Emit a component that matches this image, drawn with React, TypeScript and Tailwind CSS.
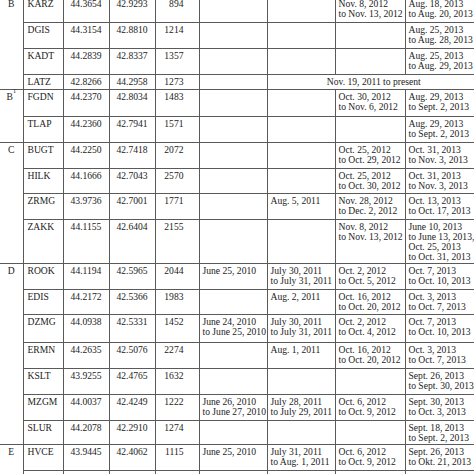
import React from 'react';

type Row = {
  group?: React.ReactNode;
  span?: number;
  station: string;
  lat: string;
  lon: string;
  elev: string;
  h: string;
  c1?: string[];
  c2?: string[];
  c3?: string[];
  c4?: string[];
  wide?: string;
};

const rows: Row[] = [
  { group: 'B', span: 4, station: 'KARZ', lat: '44.3654', lon: '42.9293', elev: '894', h: 'h-[26px]', c3: ['Nov. 8, 2012', 'to Nov. 13, 2012'], c4: ['Aug. 18, 2013', 'to Aug. 20, 2013'] },
  { station: 'DGIS', lat: '44.3154', lon: '42.8810', elev: '1214', h: 'h-[26px]', c4: ['Aug. 25, 2013', 'to Aug. 28, 2013'] },
  { station: 'KADT', lat: '44.2839', lon: '42.8337', elev: '1357', h: 'h-[26px]', c4: ['Aug. 25, 2013', 'to Aug. 29, 2013'] },
  { station: 'LATZ', lat: '42.8266', lon: '44.2958', elev: '1273', h: 'h-[15px]', wide: 'Nov. 19, 2011 to present' },
  { group: <>B<sup className="text-[6px] align-[4px]">1</sup></>, span: 2, station: 'FGDN', lat: '44.2370', lon: '42.8034', elev: '1483', h: 'h-[27px]', c3: ['Oct. 30, 2012', 'to Nov. 6, 2012'], c4: ['Aug. 29, 2013', 'to Sept. 2, 2013'] },
  { station: 'TLAP', lat: '44.2360', lon: '42.7941', elev: '1571', h: 'h-[26px]', c4: ['Aug. 29, 2013', 'to Sept. 2, 2013'] },
  { group: 'C', span: 4, station: 'BUGT', lat: '44.2250', lon: '42.7418', elev: '2072', h: 'h-[26px]', c3: ['Oct. 25, 2012', 'to Oct. 29, 2012'], c4: ['Oct. 31, 2013', 'to Nov. 3, 2013'] },
  { station: 'HILK', lat: '44.1666', lon: '42.7043', elev: '2570', h: 'h-[25px]', c3: ['Oct. 25, 2012', 'to Oct. 30, 2012'], c4: ['Oct. 31, 2013', 'to Nov. 3, 2013'] },
  { station: 'ZRMG', lat: '43.9736', lon: '42.7001', elev: '1771', h: 'h-[26px]', c2: ['Aug. 5, 2011'], c3: ['Nov. 28, 2012', 'to Dec. 2, 2012'], c4: ['Oct. 13, 2013', 'to Oct. 17, 2013'] },
  { station: 'ZAKK', lat: '44.1155', lon: '42.6404', elev: '2155', h: 'h-[44px]', c3: ['Nov. 8, 2012', 'to Nov. 13, 2012'], c4: ['June 10, 2013', 'to June 13, 2013,', 'Oct. 25, 2013', 'to Oct. 31, 2013'] },
  { group: 'D', span: 7, station: 'ROOK', lat: '44.1194', lon: '42.5965', elev: '2044', h: 'h-[26px]', c1: ['June 25, 2010'], c2: ['July 30, 2011', 'to July 31, 2011'], c3: ['Oct. 2, 2012', 'to Oct. 5, 2012'], c4: ['Oct. 7, 2013', 'to Oct. 10, 2013'] },
  { station: 'EDIS', lat: '44.2172', lon: '42.5366', elev: '1983', h: 'h-[25px]', c2: ['Aug. 2, 2011'], c3: ['Oct. 16, 2012', 'to Oct. 20, 2012'], c4: ['Oct. 3, 2013', 'to Oct. 7, 2013'] },
  { station: 'DZMG', lat: '44.0938', lon: '42.5331', elev: '1452', h: 'h-[28px]', c1: ['June 24, 2010', 'to June 25, 2010'], c2: ['July 30, 2011', 'to July 31, 2011'], c3: ['Oct. 2, 2012', 'to Oct. 4, 2012'], c4: ['Oct. 7, 2013', 'to Oct. 10, 2013'] },
  { station: 'ERMN', lat: '44.2635', lon: '42.5076', elev: '2274', h: 'h-[26px]', c2: ['Aug. 1, 2011'], c3: ['Oct. 16, 2012', 'to Oct. 20, 2012'], c4: ['Oct. 3, 2013', 'to Oct. 7, 2013'] },
  { station: 'KSLT', lat: '43.9255', lon: '42.4765', elev: '1632', h: 'h-[26px]', c4: ['Sept. 26, 2013', 'to Sept. 30, 2013'] },
  { station: 'MZGM', lat: '44.0037', lon: '42.4249', elev: '1222', h: 'h-[26px]', c1: ['June 26, 2010', 'to June 27, 2010'], c2: ['July 28, 2011', 'to July 29, 2011'], c3: ['Oct. 6, 2012', 'to Oct. 9, 2012'], c4: ['Sept. 30, 2013', 'to Oct. 3, 2013'] },
  { station: 'SLUR', lat: '44.2078', lon: '42.2910', elev: '1274', h: 'h-[24px]', c4: ['Sept. 18, 2013', 'to Sept. 2, 2013'] },
  { group: 'E', span: 2, station: 'HVCE', lat: '43.9445', lon: '42.4062', elev: '1115', h: 'h-[26px]', c1: ['June 25, 2010'], c2: ['July 31, 2011', 'to Aug. 1, 2011'], c3: ['Oct. 6, 2012', 'to Oct. 9, 2012'], c4: ['Sept. 26, 2013', 'to Okt. 21, 2013'] },
  { station: 'KRUG', lat: '44.0412', lon: '42.3855', elev: '1390', h: 'h-[26px]', c4: ['Sept. 21, 2013', 'to Sept. 24, 2013'] },
];

const cell = 'border-l border-t border-[#5a5a5a] align-top pt-[2px] px-[3px]';

function Lines({ items }: { items?: string[] }) {
  if (!items) return null;
  return (
    <>
      {items.map((t, i) => (
        <div key={i} className="whitespace-nowrap">{t}</div>
      ))}
    </>
  );
}

export default function App() {
  return (
    <div className="w-[474px] h-[474px] overflow-hidden bg-white">
      <table className="-mt-[4px] w-[480px] table-fixed border-collapse font-['Liberation_Serif',serif] text-[9.6px] leading-[10px] text-[#1c1c1c]">
        <colgroup>
          <col className="w-[23px]" />
          <col className="w-[40px]" />
          <col className="w-[46px]" />
          <col className="w-[46px]" />
          <col className="w-[44px]" />
          <col className="w-[68px]" />
          <col className="w-[68px]" />
          <col className="w-[70px]" />
          <col className="w-[75px]" />
        </colgroup>
        <tbody>
          {rows.map((r) => (
            <tr key={r.station} className={r.h}>
              {r.group !== undefined && (
                <td rowSpan={r.span} className="border-t border-[#5a5a5a] align-top pt-[2px] text-center">
                  {r.group}
                </td>
              )}
              <td className={`${cell} pl-[4px]`}>{r.station}</td>
              <td className={`${cell} text-center`}>{r.lat}</td>
              <td className={`${cell} text-center`}>{r.lon}</td>
              <td className={`${cell} text-right pr-[15px]`}>{r.elev}</td>
              <td className={cell}><Lines items={r.c1} /></td>
              {r.wide ? (
                <td colSpan={3} className={`${cell} text-center`}>{r.wide}</td>
              ) : (
                <>
                  <td className={cell}><Lines items={r.c2} /></td>
                  <td className={cell}><Lines items={r.c3} /></td>
                  <td className={cell}><Lines items={r.c4} /></td>
                </>
              )}
            </tr>
          ))}
        </tbody>
      </table>
    </div>
  );
}
